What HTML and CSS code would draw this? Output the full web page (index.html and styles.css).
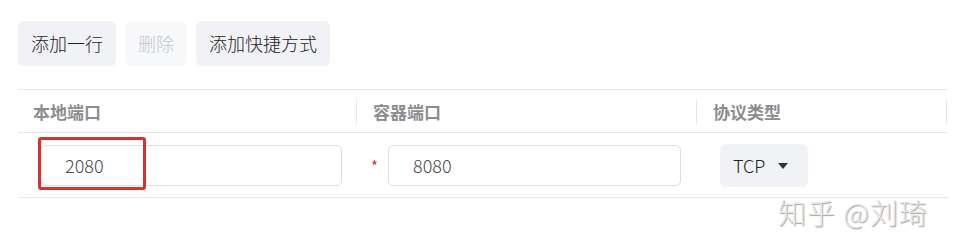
FILE: index.html
```html
<!DOCTYPE html>
<html lang="zh">
<head>
<meta charset="utf-8">
<link rel="stylesheet" href="styles.css">
</head>
<body>
<div class="page">
  <div class="toolbar">
    <button class="btn">添加一行</button>
    <button class="btn disabled">删除</button>
    <button class="btn">添加快捷方式</button>
  </div>
  <div class="table">
    <div class="thead">
      <div class="th">本地端口</div>
      <div class="th">容器端口</div>
      <div class="th">协议类型</div>
    </div>
    <div class="trow">
      <div class="td td1">
        <div class="input">2080</div>
        <div class="mark"></div>
      </div>
      <div class="td td2">
        <span class="req">*</span>
        <div class="input">8080</div>
      </div>
      <div class="td td3">
        <div class="select">TCP <span class="caret"></span></div>
      </div>
    </div>
  </div>
  <div class="watermark">知乎 @刘琦</div>
</div>
</body>
</html>
```
FILE: styles.css
```css
* { box-sizing: border-box; }
html, body { margin: 0; padding: 0; background: #fff; }
body { font-family: "Noto Sans CJK SC", "Noto Sans", sans-serif; color: #333; }
.page { position: relative; width: 953px; height: 251px; overflow: hidden; }
.toolbar { display: flex; gap: 9px; padding: 21px 0 0 18px; height: 89px; }
.btn {
  height: 45px; padding: 0 13px; border: none; border-radius: 6px;
  background: #f1f2f5; color: #222; font-family: inherit; font-size: 18px; line-height: 45px; font-weight: 300;
}
.btn.disabled { background: #f7f8fa; color: #c4c6cc; }
.table { margin-left: 18px; width: 930px; border-top: 1px solid #e6e7ea; }
.thead, .trow { display: grid; grid-template-columns: 338px 340px 251px; }
.thead { height: 43px; border-bottom: 1px solid #e6e7ea; }
.th {
  display: flex; align-items: center; padding-left: 15px;
  font-size: 17px; font-weight: 700; color: #8c8c90; position: relative;
}
.th + .th::before, .th:last-child::after {
  content: ""; position: absolute; top: 9px; width: 1px; height: 25px; background: #e8e8ea;
}
.th + .th::before { left: 0; }
.th:last-child::after { right: 0; }
.th + .th { padding-left: 17px; }
.trow { height: 65px; border-bottom: 1px solid #e6e7ea; }
.td { display: flex; align-items: center; position: relative; }
.input {
  height: 41px; border: 1px solid #dcdee3; border-radius: 5px;
  padding-left: 24px; font-size: 18px; line-height: 39px; color: #4a4a4a; font-weight: 300;
}
.td1 .input { margin-left: 22px; width: 302px; }
.td2 .req { color: #c23a33; font-size: 15px; margin-left: 15px; width: 17px; }
.td2 .input { width: 293px; }
.td3 .select {
  margin-left: 24px; width: 88px; height: 43px; border-radius: 6px; background: #f1f2f5;
  font-size: 18px; line-height: 43px; padding-left: 13px; color: #222; display: flex; align-items: center; font-weight: 300;
}
.caret {
  display: inline-block; width: 0; height: 0; margin-left: 13px; margin-top: 2px;
  border-left: 5px solid transparent; border-right: 5px solid transparent; border-top: 6px solid #333;
}
.mark {
  position: absolute; left: 20px; top: 4px; width: 108px; height: 53px;
  border: 3px solid #d8322b; border-radius: 3px;
}
.watermark {
  position: absolute; left: 778px; top: 192px; font-size: 28px; color: #e6e6e6; font-weight: 300;
  text-shadow: 1px 1px 1px #a0a0a0; letter-spacing: 1px; white-space: nowrap;
}
```
